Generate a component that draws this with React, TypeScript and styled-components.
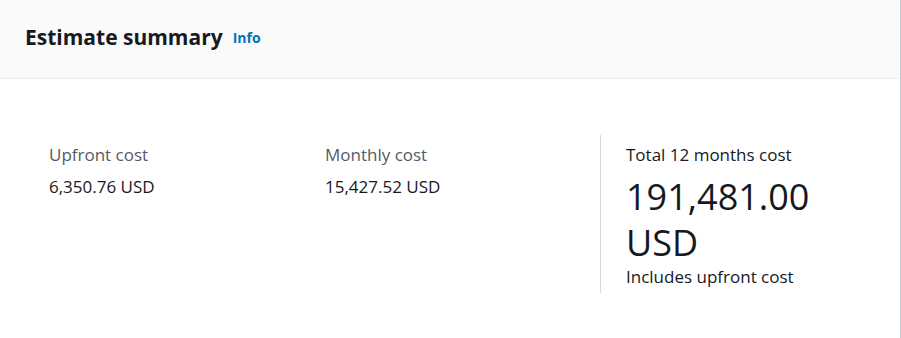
import React from "react";
import styled, { createGlobalStyle } from "styled-components";

const Global = createGlobalStyle`
  html, body { margin: 0; padding: 0; background: #ffffff; }
  body { font-family: "Open Sans", "Noto Sans", Arial, sans-serif; -webkit-font-smoothing: antialiased; }
  * { box-sizing: border-box; }
`;

const Card = styled.section`
  width: 901px;
  height: 338px;
  background: #ffffff;
  border-right: 1px solid #c6cccf;
  display: flex;
  flex-direction: column;
`;

const Header = styled.header`
  height: 79px;
  background: #fafafa;
  border-bottom: 1px solid #eaeded;
  display: flex;
  align-items: center;
  gap: 10px;
  padding: 0 0 5px 25px;
`;

const Title = styled.h2`
  margin: 0;
  font-size: 21px;
  font-weight: 700;
  color: #16191f;
  line-height: 28px;
`;

const InfoLink = styled.a`
  font-size: 14px;
  font-weight: 700;
  color: #0073bb;
  text-decoration: none;
  line-height: 28px;
  padding-top: 3px;
`;

const Body = styled.div`
  display: grid;
  grid-template-columns: 276px 275px 1fr;
  padding: 56px 0 0 49px;
`;

const Column = styled.div<{ $divided?: boolean }>`
  display: flex;
  flex-direction: column;
  gap: 10px;
  ${(p) =>
    p.$divided &&
    `
    border-left: 1px solid #d5dbdb;
    padding-left: 25px;
    min-height: 158px;
  `}
`;

const Label = styled.div<{ $dark?: boolean }>`
  font-size: 17px;
  line-height: 22px;
  color: ${(p) => (p.$dark ? "#16191f" : "#545b64")};
  margin-top: 9px;
`;

const Value = styled.div`
  font-size: 17px;
  line-height: 22px;
  color: #16191f;
`;

const BigValue = styled.div`
  font-size: 36px;
  line-height: 46px;
  color: #16191f;
  width: 200px;
  margin-top: -2px;
`;

const Note = styled.div`
  font-size: 17px;
  line-height: 22px;
  color: #16191f;
  margin-top: -10px;
`;

export default function App() {
  return (
    <>
      <Global />
      <Card>
        <Header>
          <Title>Estimate summary</Title>
          <InfoLink href="#">Info</InfoLink>
        </Header>
        <Body>
          <Column>
            <Label>Upfront cost</Label>
            <Value>6,350.76 USD</Value>
          </Column>
          <Column>
            <Label>Monthly cost</Label>
            <Value>15,427.52 USD</Value>
          </Column>
          <Column $divided>
            <Label $dark>Total 12 months cost</Label>
            <BigValue>191,481.00 USD</BigValue>
            <Note>Includes upfront cost</Note>
          </Column>
        </Body>
      </Card>
    </>
  );
}
